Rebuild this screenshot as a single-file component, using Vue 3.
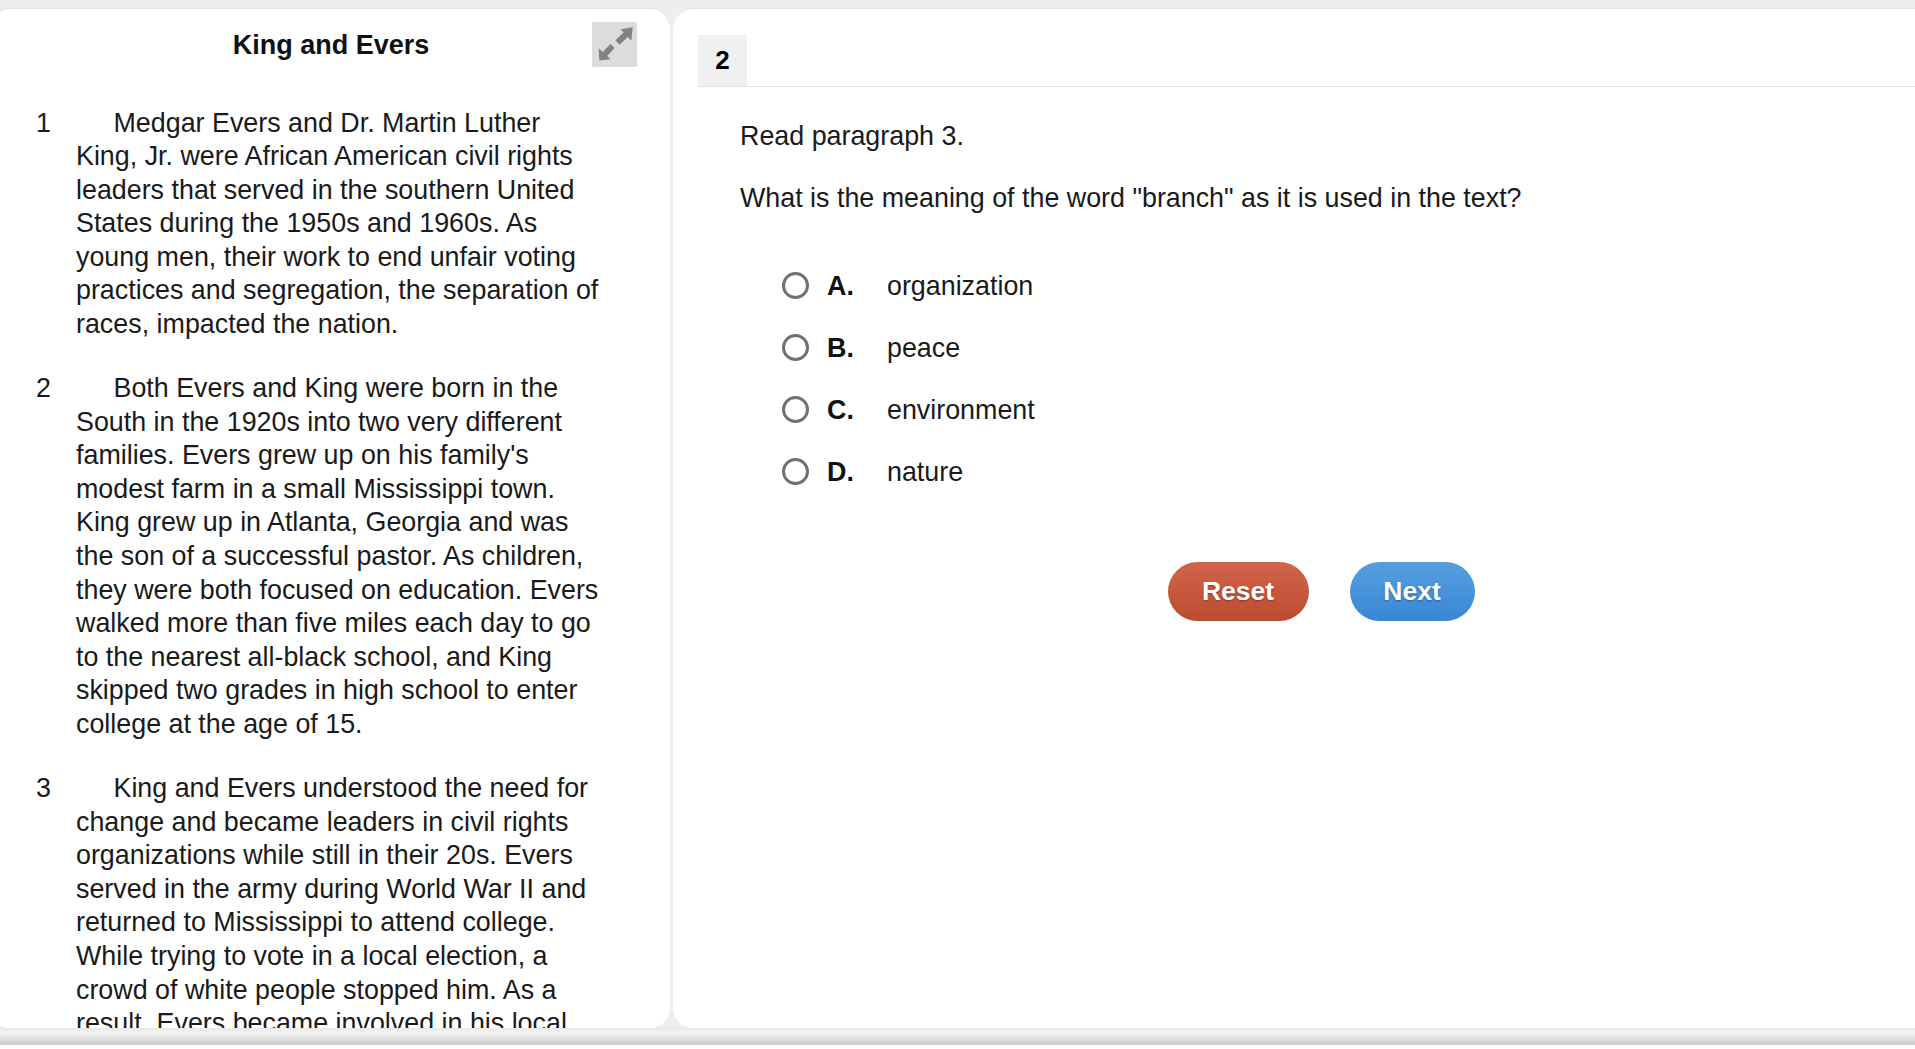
<script setup>
const paragraphs = [
  { n: 1, lines: ['Medgar Evers and Dr. Martin Luther', 'King, Jr. were African American civil rights', 'leaders that served in the southern United', 'States during the 1950s and 1960s. As', 'young men, their work to end unfair voting', 'practices and segregation, the separation of', 'races, impacted the nation.'] },
  { n: 2, lines: ['Both Evers and King were born in the', 'South in the 1920s into two very different', "families. Evers grew up on his family's", 'modest farm in a small Mississippi town.', 'King grew up in Atlanta, Georgia and was', 'the son of a successful pastor. As children,', 'they were both focused on education. Evers', 'walked more than five miles each day to go', 'to the nearest all-black school, and King', 'skipped two grades in high school to enter', 'college at the age of 15.'] },
  { n: 3, lines: ['King and Evers understood the need for', 'change and became leaders in civil rights', 'organizations while still in their 20s. Evers', 'served in the army during World War II and', 'returned to Mississippi to attend college.', 'While trying to vote in a local election, a', 'crowd of white people stopped him. As a', 'result, Evers became involved in his local'] }
]
const options = [['A.', 'organization'], ['B.', 'peace'], ['C.', 'environment'], ['D.', 'nature']]
</script>

<template>
  <div class="page">
    <div class="panels">
      <section class="left">
        <header class="title-row">
          <h1 class="title">King and Evers</h1>
          <button class="expand" aria-label="Expand">
            <svg viewBox="0 0 45 45" width="45" height="45">
              <path d="M28.700 7.300 L40.700 5.300 L39.300 18.700 Z" fill="#828282" />
              <path d="M6.700 26.300 L7.300 38.500 L18.700 37.300 Z" fill="#828282" />
              <path d="M35 11.500 L25.500 20.500 M12 33 L20.500 24" fill="none" stroke="#828282" stroke-width="6" />
            </svg>
          </button>
        </header>
        <div class="passage">
          <div v-for="p in paragraphs" :key="p.n" class="para">
            <div v-for="(l, i) in p.lines" :key="i" class="line" :class="{ first: i === 0 }">
              <span v-if="i === 0" class="num">{{ p.n }}</span>{{ l }}
            </div>
          </div>
        </div>
      </section>
      <section class="right">
        <div class="tabs"><div class="tab">2</div></div>
        <div class="question">
          <p class="read">Read paragraph 3.</p>
          <p class="ask">What is the meaning of the word "branch" as it is used in the text?</p>
          <ul class="options">
            <li v-for="o in options" :key="o[0]" class="option">
              <span class="radio"></span>
              <b class="letter">{{ o[0] }}</b>
              <span>{{ o[1] }}</span>
            </li>
          </ul>
          <div class="actions">
            <button class="btn reset">Reset</button>
            <button class="btn next">Next</button>
          </div>
        </div>
      </section>
    </div>
    <div class="footer"></div>
  </div>
</template>

<style>
html, body { margin: 0; background: #fff; overflow: hidden; }
</style>

<style scoped>
.page {
  width: 1915px;
  height: 1045px;
  display: flex;
  flex-direction: column;
  background: #eeeeee;
  font-family: "Liberation Sans", Arial, sans-serif;
  color: #1a1a1a;
  font-size: 26.850px;
  overflow: hidden;
}
.panels {
  flex: 1;
  min-height: 0;
  display: flex;
  gap: 3px;
  padding-top: 9px;
  margin-left: -10px;
  margin-right: -30px;
}
.left, .right {
  background: #fff;
  border-radius: 20px;
  overflow: hidden;
  box-shadow: 0 -1px 0 #e4e4e4;
}
.left { width: 680px; flex: none; }
.right { flex: 1; padding: 26px 0 0 25px; }
.title-row {
  position: relative;
  padding: 15px 0 0 10px;
  height: 81px;
  box-sizing: border-box;
}
.title {
  width: 662px;
  margin: 0;
  padding-top: 5px;
  text-align: center;
  font-size: 27px;
  line-height: 33px;
  font-weight: 700;
  color: #111;
}
.expand {
  position: absolute;
  top: 13px;
  left: 602px;
  width: 45px;
  height: 45px;
  padding: 0;
  border: 0;
  border-radius: 2px;
  background: #dcdcdc;
}
.expand svg { display: block; }
.passage { padding: 16.500px 0 0 86px; line-height: 33.6px; }
.para { margin-bottom: 30.400px; }
.line { white-space: nowrap; }
.line.first { margin-left: -40px; }
.num { display: inline-block; width: 77.500px; }
.tabs { border-bottom: 1px solid #e0e0e0; }
.tab {
  width: 49px;
  height: 51px;
  background: #f0f0f0;
  text-align: center;
  line-height: 51px;
  font-weight: 700;
  font-size: 26px;
  color: #000;
}
.question { padding: 33px 0 0 42px; }
.read, .ask { margin: 0; line-height: 33.6px; }
.ask { margin-top: 28.500px; }
.options { list-style: none; margin: 39.500px 0 0; padding: 0 0 0 42px; }
.option {
  height: 62px;
  display: flex;
  align-items: center;
}
.radio {
  width: 27px;
  height: 27px;
  box-sizing: border-box;
  border: 3px solid #707075;
  border-radius: 50%;
  background: #fff;
  margin: 0 18px 2px 0;
}
.letter { width: 60px; color: #111; }
.actions {
  display: flex;
  gap: 41px;
  margin: 58.500px 0 0 427.500px;
}
.btn {
  height: 59px;
  border: 0;
  border-radius: 30px;
  color: #fff;
  font: 700 26.500px "Liberation Sans", Arial, sans-serif;
  text-shadow: 0 1px 2px rgba(0, 0, 0, 0.35);
}
.reset { width: 141px; background: linear-gradient(#d2644b, #bc4c30); }
.next { width: 125px; background: linear-gradient(#559fe0, #3a86d6); }
.footer {
  flex: none;
  height: 17px;
  background: linear-gradient(#e8e8e8 0, #efefef 15%, #efefef 35%, #c9c9c9);
}
</style>
